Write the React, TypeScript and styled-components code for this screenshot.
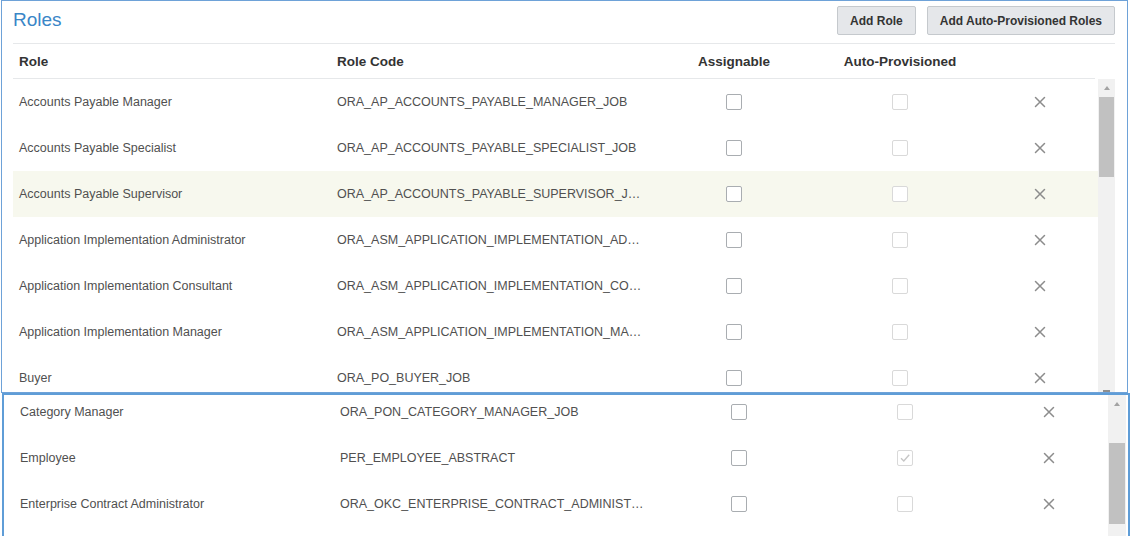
import React from "react";
import styled, { createGlobalStyle } from "styled-components";

const GlobalStyle = createGlobalStyle`
  html, body { margin: 0; padding: 0; background: #ffffff; }
  body { font-family: "Liberation Sans", Arial, sans-serif; }
  * { box-sizing: border-box; }
`;

const Page = styled.div`
  width: 1130px;
  height: 536px;
  overflow: hidden;
  display: flex;
  flex-direction: column;
  background: #fff;
  font-family: "Liberation Sans", Arial, sans-serif;
`;

const TopPanel = styled.section`
  margin-left: 1px;
  width: 1127px;
  height: 393px;
  flex: none;
  border: 1px solid #6ea2d8;
  padding: 0 12px 0 11px;
  display: flex;
  flex-direction: column;
  overflow: hidden;
`;

const TitleBar = styled.div`
  height: 43px;
  flex: none;
  display: flex;
  justify-content: space-between;
  align-items: flex-start;
  border-bottom: 1px solid #e6e8ea;
`;

const Title = styled.h1`
  margin: 8px 0 0 0;
  font-size: 19px;
  line-height: 22px;
  font-weight: normal;
  color: #3a86c7;
`;

const ButtonGroup = styled.div`
  display: flex;
  gap: 11px;
  margin-top: 5px;
`;

const Button = styled.button`
  height: 29px;
  padding: 0 12px;
  background: #e5e7ea;
  border: 1px solid #c5c9cd;
  border-radius: 2px;
  font-family: "Liberation Sans", Arial, sans-serif;
  font-weight: bold;
  font-size: 12px;
  color: #333;
`;

const HeaderRow = styled.div<{ $cols: string }>`
  height: 35px;
  flex: none;
  margin-right: 20px;
  display: grid;
  grid-template-columns: ${(p) => p.$cols};
  align-items: center;
  border-bottom: 1px solid #e6e8ea;
`;

const HeaderCell = styled.div<{ $center?: boolean }>`
  padding-left: ${(p) => (p.$center ? "0" : "6px")};
  text-align: ${(p) => (p.$center ? "center" : "left")};
  font-size: 13.5px;
  font-weight: bold;
  color: #333;
  white-space: nowrap;
`;

const Body = styled.div`
  flex: 1;
  min-height: 0;
  display: flex;
  overflow: hidden;
`;

const Viewport = styled.div`
  flex: 1;
  min-width: 0;
  overflow: hidden;
`;

const RowList = styled.div<{ $offset: number }>`
  margin-top: ${(p) => -p.$offset}px;
`;

const Row = styled.div<{ $cols: string; $highlight?: boolean }>`
  height: 46px;
  display: grid;
  grid-template-columns: ${(p) => p.$cols};
  align-items: center;
  background: ${(p) => (p.$highlight ? "#f7f8ee" : "transparent")};
`;

const TextCell = styled.div`
  padding-left: 6px;
  font-size: 12.5px;
  color: #505050;
  white-space: nowrap;
  overflow: hidden;
`;

const CenterCell = styled.div`
  display: flex;
  justify-content: center;
  align-items: center;
`;

const Box = styled.span<{ $muted?: boolean }>`
  width: 16px;
  height: 16px;
  display: inline-flex;
  align-items: center;
  justify-content: center;
  background: #fff;
  border: 1px solid ${(p) => (p.$muted ? "#d9d9d9" : "#a9adb1")};
  border-radius: 2px;
`;

const Scrollbar = styled.div<{ $width: number }>`
  width: ${(p) => p.$width}px;
  flex: none;
  background: #f1f1f1;
  display: flex;
  flex-direction: column;
  align-items: center;
`;

const ArrowBox = styled.div`
  height: 17px;
  width: 100%;
  flex: none;
  display: flex;
  align-items: center;
  justify-content: center;
`;

const ArrowUp = styled.span`
  width: 0;
  height: 0;
  border-left: 3.5px solid transparent;
  border-right: 3.5px solid transparent;
  border-bottom: 4px solid #a3a3a3;
`;

const Thumb = styled.div<{ $top: number; $height: number }>`
  margin-top: ${(p) => p.$top}px;
  width: calc(100% - 2px);
  height: ${(p) => p.$height}px;
  flex: none;
  background: #c1c1c1;
`;

const BottomDash = styled.span`
  margin-top: auto;
  width: 7px;
  height: 2px;
  background: #8e8e8e;
  flex: none;
`;

const LowerPanel = styled.section`
  margin-left: 2px;
  width: 1128px;
  height: 200px;
  flex: none;
  border: 2px solid #5f9dd7;
  border-bottom: none;
  padding: 0 2px 0 10px;
  display: flex;
`;

const CheckBox: React.FC<{ muted?: boolean; checked?: boolean }> = ({ muted, checked }) => (
  <Box $muted={muted}>
    {checked && (
      <svg width="12" height="12" viewBox="0 0 12 12">
        <path d="M2 6.2 L4.8 9 L10.2 2.8" fill="none" stroke="#c6c6c6" strokeWidth="1.4" />
      </svg>
    )}
  </Box>
);

const RemoveIcon: React.FC = () => (
  <svg width="12" height="12" viewBox="0 0 12 12">
    <path d="M1.5 1.5 L10.5 10.5 M10.5 1.5 L1.5 10.5" stroke="#8c8c8c" strokeWidth="1.5" strokeLinecap="round" />
  </svg>
);

type RoleRow = { name: string; code: string; auto?: boolean; highlight?: boolean };

const topRows: RoleRow[] = [
  { name: "Accounts Payable Manager", code: "ORA_AP_ACCOUNTS_PAYABLE_MANAGER_JOB" },
  { name: "Accounts Payable Specialist", code: "ORA_AP_ACCOUNTS_PAYABLE_SPECIALIST_JOB" },
  { name: "Accounts Payable Supervisor", code: "ORA_AP_ACCOUNTS_PAYABLE_SUPERVISOR_J…", highlight: true },
  { name: "Application Implementation Administrator", code: "ORA_ASM_APPLICATION_IMPLEMENTATION_AD…" },
  { name: "Application Implementation Consultant", code: "ORA_ASM_APPLICATION_IMPLEMENTATION_CO…" },
  { name: "Application Implementation Manager", code: "ORA_ASM_APPLICATION_IMPLEMENTATION_MA…" },
  { name: "Buyer", code: "ORA_PO_BUYER_JOB" },
];

const lowerRows: RoleRow[] = [
  { name: "Category Manager", code: "ORA_PON_CATEGORY_MANAGER_JOB" },
  { name: "Employee", code: "PER_EMPLOYEE_ABSTRACT", auto: true },
  { name: "Enterprise Contract Administrator", code: "ORA_OKC_ENTERPRISE_CONTRACT_ADMINIST…" },
];

const TOP_COLS = "318px 360px 86px 246px 34px 1fr";
const LOW_COLS = "320px 361px 88px 244px 44px 1fr";

const RoleRows: React.FC<{ rows: RoleRow[]; cols: string; offset: number }> = ({ rows, cols, offset }) => (
  <Viewport>
    <RowList $offset={offset}>
      {rows.map((r) => (
        <Row key={r.name} $cols={cols} $highlight={r.highlight}>
          <TextCell>{r.name}</TextCell>
          <TextCell>{r.code}</TextCell>
          <CenterCell>
            <CheckBox />
          </CenterCell>
          <CenterCell>
            <CheckBox muted checked={r.auto} />
          </CenterCell>
          <CenterCell>
            <RemoveIcon />
          </CenterCell>
          <div />
        </Row>
      ))}
    </RowList>
  </Viewport>
);

export default function App() {
  return (
    <>
      <GlobalStyle />
      <Page>
        <TopPanel>
          <TitleBar>
            <Title>Roles</Title>
            <ButtonGroup>
              <Button>Add Role</Button>
              <Button>Add Auto-Provisioned Roles</Button>
            </ButtonGroup>
          </TitleBar>
          <HeaderRow $cols={TOP_COLS}>
            <HeaderCell>Role</HeaderCell>
            <HeaderCell>Role Code</HeaderCell>
            <HeaderCell $center>Assignable</HeaderCell>
            <HeaderCell $center>Auto-Provisioned</HeaderCell>
            <div />
            <div />
          </HeaderRow>
          <Body>
            <RoleRows rows={topRows} cols={TOP_COLS} offset={0} />
            <Scrollbar $width={17}>
              <ArrowBox>
                <ArrowUp />
              </ArrowBox>
              <Thumb $top={1} $height={80} />
              <BottomDash />
            </Scrollbar>
          </Body>
        </TopPanel>
        <LowerPanel>
          <RoleRows rows={lowerRows} cols={LOW_COLS} offset={6} />
          <Scrollbar $width={18}>
            <ArrowBox>
              <ArrowUp />
            </ArrowBox>
            <Thumb $top={31} $height={81} />
          </Scrollbar>
        </LowerPanel>
      </Page>
    </>
  );
}
